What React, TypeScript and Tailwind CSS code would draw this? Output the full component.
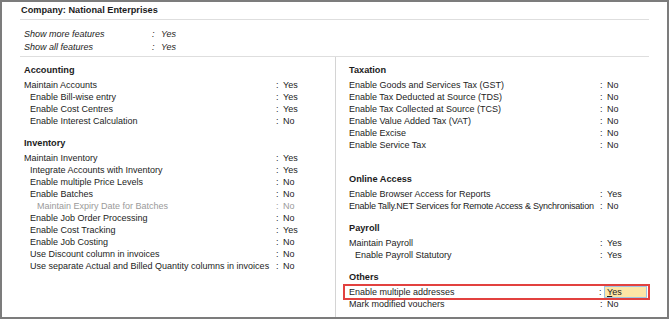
import React from "react";

type Row = { label: string; value: string; level?: number; muted?: boolean; blank?: boolean; tight?: boolean };
type Section = { title: string; rows: Row[] };

const LEFT: Section[] = [
  {
    title: "Accounting",
    rows: [
      { label: "Maintain Accounts", value: "Yes" },
      { label: "Enable Bill-wise entry", value: "Yes", level: 1 },
      { label: "Enable Cost Centres", value: "Yes", level: 1 },
      { label: "Enable Interest Calculation", value: "No", level: 1 },
    ],
  },
  {
    title: "Inventory",
    rows: [
      { label: "Maintain Inventory", value: "Yes" },
      { label: "Integrate Accounts with Inventory", value: "Yes", level: 1 },
      { label: "Enable multiple Price Levels", value: "No", level: 1 },
      { label: "Enable Batches", value: "No", level: 1 },
      { label: "Maintain Expiry Date for Batches", value: "No", level: 2, muted: true },
      { label: "Enable Job Order Processing", value: "No", level: 1 },
      { label: "Enable Cost Tracking", value: "Yes", level: 1 },
      { label: "Enable Job Costing", value: "No", level: 1 },
      { label: "Use Discount column in invoices", value: "No", level: 1 },
      { label: "Use separate Actual and Billed Quantity columns in invoices", value: "No", level: 1 },
    ],
  },
];

const RIGHT: Section[] = [
  {
    title: "Taxation",
    rows: [
      { label: "Enable Goods and Services Tax (GST)", value: "No" },
      { label: "Enable Tax Deducted at Source (TDS)", value: "No" },
      { label: "Enable Tax Collected at Source (TCS)", value: "No" },
      { label: "Enable Value Added Tax (VAT)", value: "No" },
      { label: "Enable Excise", value: "No" },
      { label: "Enable Service Tax", value: "No" },
      { label: "", value: "", blank: true },
    ],
  },
  {
    title: "Online Access",
    rows: [
      { label: "Enable Browser Access for Reports", value: "Yes" },
      { label: "Enable Tally.NET Services for Remote Access & Synchronisation", value: "No", tight: true },
    ],
  },
  {
    title: "Payroll",
    rows: [
      { label: "Maintain Payroll", value: "Yes" },
      { label: "Enable Payroll Statutory", value: "Yes", level: 1 },
    ],
  },
];

const indent = (level?: number) => (level === 2 ? "pl-[13px]" : level === 1 ? "pl-[6px]" : "");

function LeftRow({ row }: { row: Row }) {
  return (
    <div className={`flex h-[12px] leading-[12px] whitespace-nowrap ${row.muted ? "text-[#9a9a9a]" : ""}`}>
      <div className={`flex-1 min-w-0 ${indent(row.level)}`}>{row.label}</div>
      <div className="w-[7px]">:</div>
      <div className="w-[52px]">{row.value}</div>
    </div>
  );
}

function RightRow({ row }: { row: Row }) {
  if (row.blank) return <div className="h-[12px]" />;
  return (
    <div className="flex h-[12px] leading-[12px] whitespace-nowrap">
      <div className={`flex-1 min-w-0 ${indent(row.level)} ${row.tight ? "tracking-[-0.22px]" : ""}`}>
        {row.label}
      </div>
      <div className="w-[5px]">:</div>
      <div className="w-[43px] pl-[2px]">{row.value}</div>
    </div>
  );
}

function Title({ children }: { children: React.ReactNode }) {
  return <div className="h-[12px] leading-[12px] font-bold text-[9.2px] mb-[3px]">{children}</div>;
}

export default function App() {
  return (
    <div
      className="w-[669px] h-[319px] bg-white border-2 border-[#7c7c7c] flex flex-col text-[9px] text-[#1c1c1c]"
      style={{ fontFamily: '"Liberation Sans", Arial, sans-serif' }}
    >
      <div className="px-[18px] flex flex-col flex-1 min-w-0">
        <div className="h-[18px] flex items-center pl-[1px] font-bold text-[9.2px] border-b border-[#dedede]">
          Company: National Enterprises
        </div>

        <div className="pt-[8px] pb-[3px] pl-[4px] italic border-b border-[#dedede]">
          {[
            ["Show more features", "Yes"],
            ["Show all features", "Yes"],
          ].map(([l, v]) => (
            <div key={l} className="flex h-[12.6px] leading-[12.6px]">
              <div className="w-[128px]">{l}</div>
              <div className="w-[9px]">:</div>
              <div>{v}</div>
            </div>
          ))}
        </div>

        <div className="flex flex-1">
          <div className="w-[315px] min-w-0 pl-[4px] pt-[7px] flex flex-col gap-[10px]">
            {LEFT.map((s) => (
              <div key={s.title}>
                <Title>{s.title}</Title>
                {s.rows.map((r) => (
                  <LeftRow key={r.label} row={r} />
                ))}
              </div>
            ))}
          </div>

          <div className="flex-1 min-w-0 border-l border-[#d4d4d4] pl-[13px] pr-[1px] pt-[7px] flex flex-col gap-[10px]">
            {RIGHT.map((s) => (
              <div key={s.title}>
                <Title>{s.title}</Title>
                {s.rows.map((r, i) => (
                  <RightRow key={r.label + i} row={r} />
                ))}
              </div>
            ))}
            <div>
              <Title>Others</Title>
              <div className="flex h-[16px] -my-[2px] leading-[12px] whitespace-nowrap items-center -ml-[6px] -mr-[2px] pl-[4px] pr-[1px] border-2 border-[#e2413f]">
                <div className="flex-1 min-w-0">Enable multiple addresses</div>
                <div className="w-[5px]">:</div>
                <div className="w-[43px] h-[12px] pl-[2px] bg-[#fde5a6] border border-[#9fc4e4] leading-[10px]">
                  <span className="underline">Y</span>es
                </div>
              </div>
              <RightRow row={{ label: "Mark modified vouchers", value: "No" }} />
            </div>
          </div>
        </div>
      </div>
    </div>
  );
}
